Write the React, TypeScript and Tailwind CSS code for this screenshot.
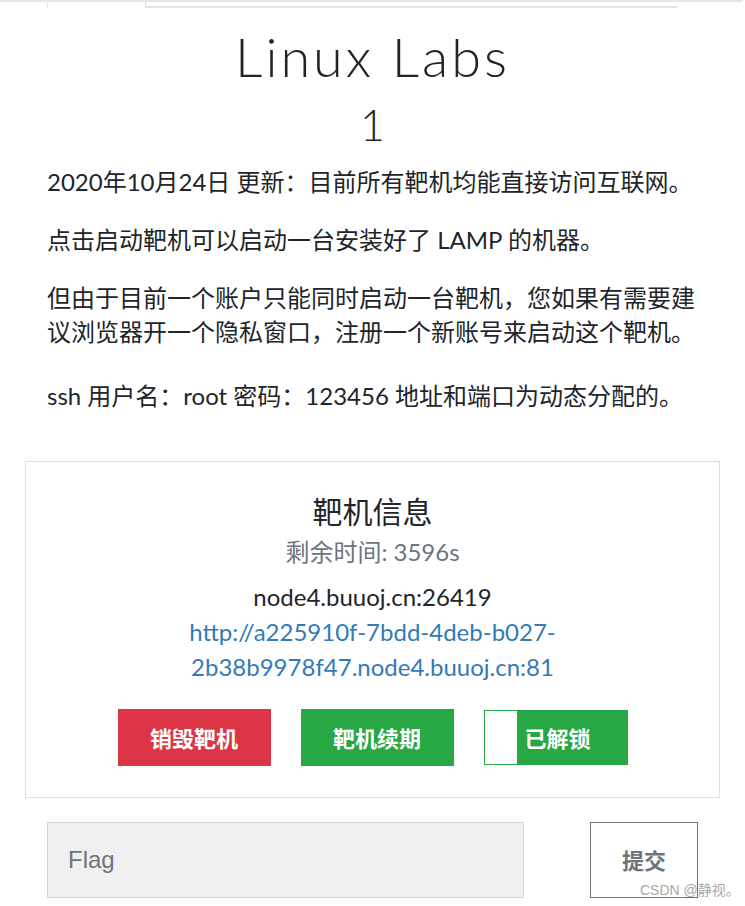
const lato = { fontFamily: 'Lato, "Noto Sans CJK SC", sans-serif' };

function TopTabs() {
  return (
    <div className="w-full">
      <div className="h-[2px] border-t-2 border-[#e6e6e6] mr-[2px]" />
      <div className="flex h-[6px]">
        <div className="ml-[47px] w-[98px] border-l border-[#e3e3e3]" />
        <div className="w-[532px] border-l border-b-2 border-[#e3e3ea]" />
      </div>
    </div>
  );
}

function TargetCard() {
  return (
    <div className="mx-[25px] mt-[48px] border border-[#dedede] pt-[29px] pb-[31px] text-center">
      <div className="text-[30px] leading-[40px] text-[#212529]">靶机信息</div>
      <div className="mt-[1px] text-[24px] leading-[40px] text-[#6c757d]">剩余时间: 3596s</div>
      <div className="mt-[7px] text-[24px] leading-[35px] text-[#212529]">node4.buuoj.cn:26419</div>
      <div className="text-[24px] leading-[35px] text-[#337ab7]">
        http://a225910f-7bdd-4deb-b027-
        <br />
        2b38b9978f47.node4.buuoj.cn:81
      </div>
      <div className="mt-[25px] flex justify-center gap-[30px]" style={{ fontFamily: '"Noto Sans CJK SC", sans-serif' }}>
        <button className="w-[153px] h-[57px] bg-[#dc3545] text-white text-[22px] font-bold">销毁靶机</button>
        <button className="w-[153px] h-[57px] bg-[#28a745] text-white text-[22px] font-bold">靶机续期</button>
        <div className="w-[144px] h-[55px] mt-[1px] flex border border-[#28a745] bg-[#28a745]">
          <div className="w-[32px] h-full bg-white" />
          <div className="flex-1 flex items-center pl-[8px] text-white text-[22px] font-bold">已解锁</div>
        </div>
      </div>
    </div>
  );
}

export default function App() {
  return (
    <div className="w-[745px] h-[906px] bg-white overflow-hidden relative" style={lato}>
      <TopTabs />
      <h1 className="mt-[18px] text-center text-[54px] leading-[62px] font-light tracking-[3px] text-[#212529]">
        Linux Labs
      </h1>
      <div className="mt-[12px] text-center text-[43px] leading-[50px] font-light text-[#212529]">1</div>

      <div className="px-[47px] mt-[15px] text-[24px] leading-[34px] text-[#212529]">
        <p className="mb-[24px]">2020年10月24日 更新：目前所有靶机均能直接访问互联网。</p>
        <p className="mb-[24px]">点击启动靶机可以启动一台安装好了 LAMP 的机器。</p>
        <p className="mb-[30px]">但由于目前一个账户只能同时启动一台靶机，您如果有需要建议浏览器开一个隐私窗口，注册一个新账号来启动这个靶机。</p>
        <p>ssh 用户名：root 密码：123456 地址和端口为动态分配的。</p>
      </div>

      <TargetCard />

      <div className="mt-[24px] flex px-[47px]">
        <div
          className="w-[477px] h-[76px] bg-[#f0f0f0] border border-[#d3d6d9] flex items-center pl-[20px] text-[24px] text-[#6c757d]"
          style={{ fontFamily: '"Liberation Sans", Arial, sans-serif' }}
        >
          Flag
        </div>
        <button
          className="ml-[66px] w-[108px] h-[76px] border border-[#6c757d] text-[22px] font-bold text-[#6c757d] pb-[2px]"
          style={{ fontFamily: '"Noto Sans CJK SC", sans-serif' }}
        >
          提交
        </button>
      </div>

      <div
        className="absolute left-[640px] top-[880px] text-[14px] leading-[20px] text-[#a8a8a8]"
        style={{ fontFamily: '"Liberation Sans", "Noto Sans CJK SC", sans-serif' }}
      >
        CSDN @静视。
      </div>
    </div>
  );
}
